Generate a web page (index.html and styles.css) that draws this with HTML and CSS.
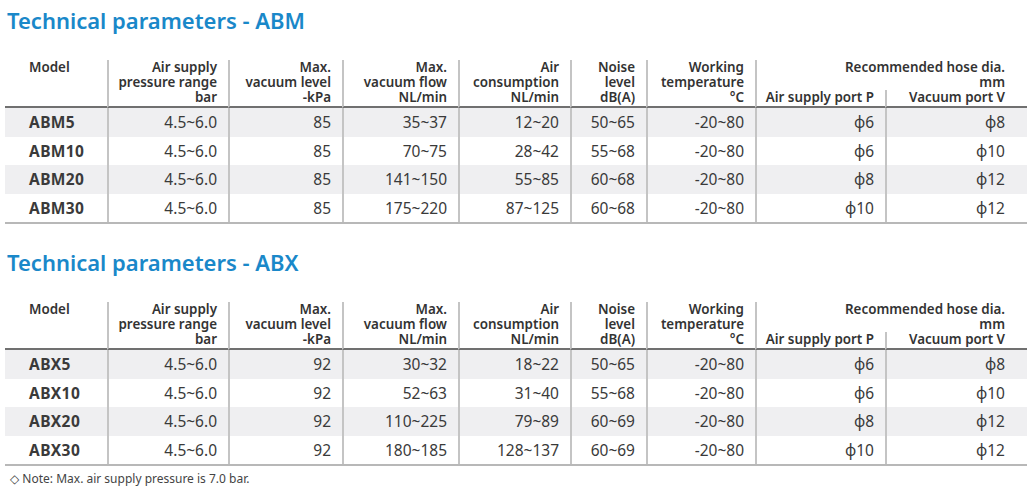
FILE: index.html
```html
<!DOCTYPE html>
<html lang="en">
<head>
<meta charset="utf-8">
<title>Technical parameters</title>
<link rel="stylesheet" href="styles.css">
</head>
<body>
<main class="page">
  <section class="spec">
    <h2 class="spec-title">Technical parameters - ABM</h2>
    <table class="spec-table">
      <colgroup>
        <col class="c-model"><col class="c-press"><col class="c-vlevel"><col class="c-vflow"><col class="c-air"><col class="c-noise"><col class="c-temp"><col class="c-portp"><col class="c-portv">
      </colgroup>
      <thead>
        <tr class="head-row">
          <th rowspan="2" class="th-model">Model</th>
          <th rowspan="2">Air supply<br>pressure range<br>bar</th>
          <th rowspan="2">Max.<br>vacuum level<br>-kPa</th>
          <th rowspan="2">Max.<br>vacuum flow<br>NL/min</th>
          <th rowspan="2">Air<br>consumption<br>NL/min</th>
          <th rowspan="2">Noise<br>level<br>dB(A)</th>
          <th rowspan="2">Working<br>temperature<br>°C</th>
          <th colspan="2" class="th-group">Recommended hose dia.<br>mm</th>
        </tr>
        <tr class="sub-row">
          <th class="th-sub">Air supply port P</th>
          <th class="th-sub th-last">Vacuum port V</th>
        </tr>
      </thead>
      <tbody>
        <tr><td class="td-model">ABM5</td><td>4.5~6.0</td><td>85</td><td>35~37</td><td>12~20</td><td>50~65</td><td>-20~80</td><td>ϕ6</td><td class="td-last">ϕ8</td></tr>
        <tr><td class="td-model">ABM10</td><td>4.5~6.0</td><td>85</td><td>70~75</td><td>28~42</td><td>55~68</td><td>-20~80</td><td>ϕ6</td><td class="td-last">ϕ10</td></tr>
        <tr><td class="td-model">ABM20</td><td>4.5~6.0</td><td>85</td><td>141~150</td><td>55~85</td><td>60~68</td><td>-20~80</td><td>ϕ8</td><td class="td-last">ϕ12</td></tr>
        <tr><td class="td-model">ABM30</td><td>4.5~6.0</td><td>85</td><td>175~220</td><td>87~125</td><td>60~68</td><td>-20~80</td><td>ϕ10</td><td class="td-last">ϕ12</td></tr>
      </tbody>
    </table>
  </section>

  <section class="spec">
    <h2 class="spec-title">Technical parameters - ABX</h2>
    <table class="spec-table">
      <colgroup>
        <col class="c-model"><col class="c-press"><col class="c-vlevel"><col class="c-vflow"><col class="c-air"><col class="c-noise"><col class="c-temp"><col class="c-portp"><col class="c-portv">
      </colgroup>
      <thead>
        <tr class="head-row">
          <th rowspan="2" class="th-model">Model</th>
          <th rowspan="2">Air supply<br>pressure range<br>bar</th>
          <th rowspan="2">Max.<br>vacuum level<br>-kPa</th>
          <th rowspan="2">Max.<br>vacuum flow<br>NL/min</th>
          <th rowspan="2">Air<br>consumption<br>NL/min</th>
          <th rowspan="2">Noise<br>level<br>dB(A)</th>
          <th rowspan="2">Working<br>temperature<br>°C</th>
          <th colspan="2" class="th-group">Recommended hose dia.<br>mm</th>
        </tr>
        <tr class="sub-row">
          <th class="th-sub">Air supply port P</th>
          <th class="th-sub th-last">Vacuum port V</th>
        </tr>
      </thead>
      <tbody>
        <tr><td class="td-model">ABX5</td><td>4.5~6.0</td><td>92</td><td>30~32</td><td>18~22</td><td>50~65</td><td>-20~80</td><td>ϕ6</td><td class="td-last">ϕ8</td></tr>
        <tr><td class="td-model">ABX10</td><td>4.5~6.0</td><td>92</td><td>52~63</td><td>31~40</td><td>55~68</td><td>-20~80</td><td>ϕ6</td><td class="td-last">ϕ10</td></tr>
        <tr><td class="td-model">ABX20</td><td>4.5~6.0</td><td>92</td><td>110~225</td><td>79~89</td><td>60~69</td><td>-20~80</td><td>ϕ8</td><td class="td-last">ϕ12</td></tr>
        <tr><td class="td-model">ABX30</td><td>4.5~6.0</td><td>92</td><td>180~185</td><td>128~137</td><td>60~69</td><td>-20~80</td><td>ϕ10</td><td class="td-last">ϕ12</td></tr>
      </tbody>
    </table>
    <p class="note">◇ Note: Max. air supply pressure is 7.0 bar.</p>
  </section>
</main>
</body>
</html>
```

FILE: styles.css
```css
* { box-sizing: border-box; }

html, body {
  margin: 0;
  padding: 0;
  background: #ffffff;
}

body {
  font-family: "Noto Sans", "Open Sans", "DejaVu Sans", sans-serif;
  color: #333333;
}

.page {
  padding: 5px 3px 0 5px;
}

.spec + .spec {
  margin-top: 23px;
}

.spec-title {
  margin: 0 0 25px 2px;
  font-size: 22px;
  line-height: 30px;
  font-weight: 600;
  color: #1a88c9;
}

.spec-table {
  width: 1022px;
  table-layout: fixed;
  border-collapse: separate;
  border-spacing: 0;
  border-bottom: 2px solid #b8b8b8;
}

.c-model { width: 102px; }
.c-press { width: 121px; }
.c-vlevel { width: 114px; }
.c-vflow { width: 116px; }
.c-air { width: 112px; }
.c-noise { width: 76px; }
.c-temp { width: 109px; }
.c-portp { width: 130px; }
.c-portv { width: 142px; }

.head-row { height: 30px; }
.sub-row { height: 18px; }

.spec-table th {
  font-size: 13.4px;
  line-height: 15px;
  font-weight: 600;
  color: #333333;
  text-align: right;
  vertical-align: top;
  padding: 0 11px 1px 0;
  border-left: 2px solid #c4c4c4;
  border-bottom: 2px solid #707070;
  white-space: nowrap;
}

.spec-table th.th-model {
  text-align: left;
  padding-left: 24px;
  border-left: 0;
}

.spec-table th.th-group {
  padding: 0 22px 0 0;
  border-bottom: 0;
}

.spec-table th.th-sub {
  vertical-align: bottom;
  padding-top: 0;
  padding-bottom: 1px;
}

.spec-table th.th-last,
.spec-table td.td-last {
  padding-right: 22px;
}

.spec-table tbody tr {
  height: 28.5px;
}

.spec-table tbody tr:nth-child(odd) td {
  background: #efeff1;
}

.spec-table td {
  font-size: 15.5px;
  line-height: 18px;
  color: #3a3a3a;
  text-align: right;
  vertical-align: middle;
  padding: 0 11px 0 0;
  border-left: 2px solid #c4c4c4;
  white-space: nowrap;
}

.spec-table td.td-model {
  text-align: left;
  font-weight: 700;
  font-size: 15.5px;
  letter-spacing: 0.4px;
  padding-left: 24px;
  border-left: 0;
}

.note {
  margin: 5px 0 0 5px;
  font-size: 12px;
  line-height: 16px;
  color: #444444;
}
```
